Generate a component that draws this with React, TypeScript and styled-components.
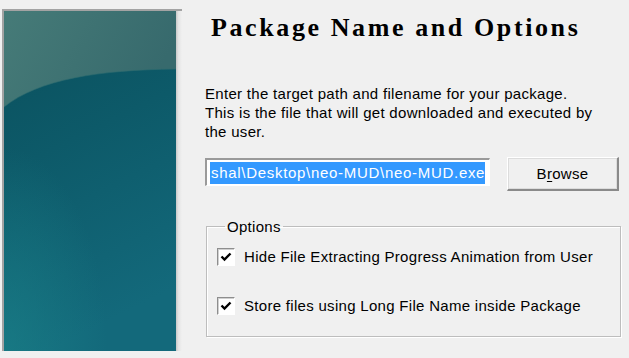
import React from 'react';
import styled, { createGlobalStyle } from 'styled-components';

const GlobalStyle = createGlobalStyle`
  html, body {
    margin: 0;
    padding: 0;
    background: #f0f0f0;
  }
  body {
    font-family: "Liberation Sans", Arial, sans-serif;
    color: #000;
  }
`

const Page = styled.div`
  display: flex;
  width: 629px;
  height: 358px;
  padding: 9px 0 0 2px;
  box-sizing: border-box;
  overflow: hidden;
`

const Banner = styled.div`
  width: 180px;
  height: 342px;
  flex-shrink: 0;
  box-sizing: border-box;
  border-top: 2px solid #a3a3a3;
  border-left: 2px solid #a3a3a3;
  display: flex;
`

const BannerEdge = styled.div`
  width: 6px;
  background: linear-gradient(to right, #c8c8c8, #e4e4e4 40%, #f0f0f0);
`

const Content = styled.div`
  display: flex;
  flex-direction: column;
  margin-left: 23px;
`

const Title = styled.h1`
  margin: 4px 0 0 6px;
  font-family: "Liberation Serif", "Times New Roman", serif;
  font-weight: bold;
  font-size: 26px;
  line-height: 30px;
  letter-spacing: 2.6px;
  white-space: nowrap;
`

const Description = styled.p`
  margin: 41px 0 0 0;
  width: 390px;
  font-size: 15px;
  letter-spacing: 0.3px;
  line-height: 19px;
`

const PathRow = styled.div`
  display: flex;
  align-items: flex-start;
  margin-top: 17px;
`

const PathInput = styled.div`
  width: 285px;
  height: 28px;
  box-sizing: border-box;
  padding: 2px 3px;
  border-top: 2px solid #9a9a9a;
  border-left: 2px solid #9a9a9a;
  border-right: 1px solid #ffffff;
  border-bottom: 1px solid #ffffff;
  background: #fff;
  overflow: hidden;
  white-space: nowrap;
`

const Selected = styled.span`
  display: inline-block;
  height: 22px;
  line-height: 22px;
  font-size: 15px;
  letter-spacing: 0.7px;
  background: #3399ff;
  color: #fff;
  padding-left: 1px;
`

const BrowseButton = styled.div`
  width: 112px;
  height: 34px;
  margin: -1px 0 0 17px;
  box-sizing: border-box;
  border-top: 1px solid #ffffff;
  border-left: 1px solid #ffffff;
  border-right: 2px solid #8a8a8a;
  border-bottom: 2px solid #8a8a8a;
  box-shadow: inset 0 0 0 1px #dcdcdc;
  background: #f0f0f0;
  display: flex;
  align-items: center;
  justify-content: center;
  font-size: 15px;
  letter-spacing: 0.3px;
  u { text-decoration: underline; text-underline-offset: 2px; }
`

const OptionsGroup = styled.fieldset`
  width: 415px;
  height: 119px;
  margin: 27px 0 0 1px;
  padding: 12px 0 0 10px;
  box-sizing: border-box;
  border: 1px solid #bdbdbd;
  box-shadow: inset 1px 1px 0 #fff, 1px 1px 0 #fff;
  display: flex;
  flex-direction: column;
  gap: 30px;
`

const Legend = styled.legend`
  padding: 0 2px;
  margin-left: 8px;
  font-size: 15px;
  letter-spacing: 0.3px;
  line-height: 17px;
`

const CheckRow = styled.label`
  display: flex;
  align-items: center;
  gap: 9px;
  font-size: 15px;
  letter-spacing: 0.3px;
  line-height: 19px;
`

const CheckBox = styled.span`
  width: 18px;
  height: 18px;
  box-sizing: border-box;
  border-top: 1px solid #8e8e8e;
  border-left: 1px solid #8e8e8e;
  border-right: 1px solid #ffffff;
  border-bottom: 1px solid #ffffff;
  box-shadow: inset 1px 1px 0 #d0d0d0;
  background: #fff;
  display: flex;
  align-items: center;
  justify-content: center;
`

const Check = () => (
  <svg width="12" height="12" viewBox="0 0 12 12">
    <path d="M1.5 5.5 L4.5 8.5 L10.5 2.5" fill="none" stroke="#000" strokeWidth="2.4" />
  </svg>
)

const BannerArt = () => (
  <svg width="172" height="340" viewBox="0 0 172 340">
    <defs>
      <linearGradient id="deep" x1="0" y1="0" x2="0.25" y2="1">
        <stop offset="0" stopColor="#0a4f5c" />
        <stop offset="0.45" stopColor="#0d5a69" />
        <stop offset="1" stopColor="#13697b" />
      </linearGradient>
      <linearGradient id="gloss" x1="0" y1="0" x2="1" y2="0.3">
        <stop offset="0" stopColor="#467b78" />
        <stop offset="1" stopColor="#376a6d" />
      </linearGradient>
      <radialGradient id="glow" cx="0" cy="1" r="0.6">
        <stop offset="0" stopColor="#1a8088" stopOpacity="0.7" />
        <stop offset="1" stopColor="#1a8088" stopOpacity="0" />
      </radialGradient>
    </defs>
    <rect width="172" height="340" fill="url(#deep)" />
    <rect width="172" height="340" fill="url(#glow)" />
    <path d="M0 0 H172 V58 C95 59 35 68 0 96 Z" fill="url(#gloss)" />
    <path d="M0 96 C35 68 95 59 172 58" fill="none" stroke="#2f6c70" strokeWidth="1" opacity="0.6" />
  </svg>
)

const App = () => {
  return (
    <Page>
      <GlobalStyle />
      <Banner>
        <BannerArt />
        <BannerEdge />
      </Banner>
      <Content>
        <Title>Package Name and Options</Title>
        <Description>
          Enter the target path and filename for your package.
          This is the file that will get downloaded and executed by
          the user.
        </Description>
        <PathRow>
          <PathInput>
            <Selected>shal\Desktop\neo-MUD\neo-MUD.exe</Selected>
          </PathInput>
          <BrowseButton>
            <span>B<u>r</u>owse</span>
          </BrowseButton>
        </PathRow>
        <OptionsGroup>
          <Legend>Options</Legend>
          <CheckRow>
            <CheckBox><Check /></CheckBox>
            Hide File Extracting Progress Animation from User
          </CheckRow>
          <CheckRow>
            <CheckBox><Check /></CheckBox>
            Store files using Long File Name inside Package
          </CheckRow>
        </OptionsGroup>
      </Content>
    </Page>
  )
};

export default App;
